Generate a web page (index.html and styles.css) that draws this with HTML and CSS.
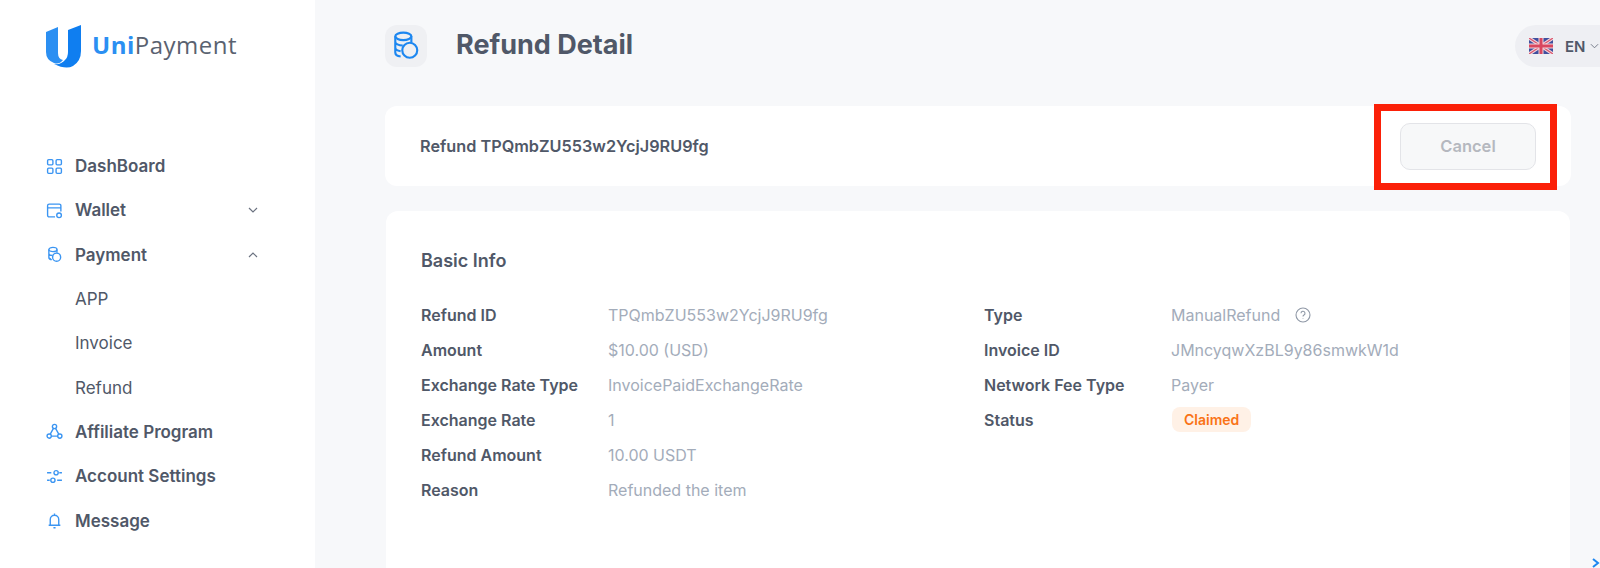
FILE: index.html
```html
<!DOCTYPE html>
<html lang="en">
<head>
<meta charset="utf-8">
<title>Refund Detail</title>
<link rel="stylesheet" href="styles.css">
</head>
<body>
<div class="app">
  <aside class="sidebar">
    <div class="logo">
      <svg class="logo-mark" width="36" height="44" viewBox="0 0 36 44">
        <path d="M0 7 L12 2 V28 Q12 34 17 35 Q13 40 8 38 Q0 35 0 27 Z" fill="#2b8ff2"/>
        <path d="M35 0 V26 Q35 36 27 41 Q20 45 8 39 Q15 40 19 35 Q22 32 22 27 V5 Z" fill="#0f7ef0"/>
      </svg>
      <span class="logo-text"><span class="logo-uni">Uni</span>Payment</span>
    </div>
    <nav class="nav">
      <a class="nav-item">
        <svg class="nav-icon" viewBox="0 0 16 16"><rect x="1.5" y="1.5" width="5" height="5" rx="1"/><rect x="9.5" y="1.5" width="5" height="5" rx="1"/><rect x="1.5" y="9.5" width="5" height="5" rx="1"/><rect x="9.5" y="9.5" width="5" height="5" rx="1"/></svg>
        <span>DashBoard</span>
      </a>
      <a class="nav-item">
        <svg class="nav-icon" viewBox="0 0 16 16"><path d="M8.5 14H3a1.5 1.5 0 0 1-1.500-1.500V3.500A1.500 1.500 0 0 1 3 2h9.500A1.500 1.500 0 0 1 14 3.500V9M1.500 5.500H14"/><circle cx="12.300" cy="12.500" r="2.200"/></svg>
        <span>Wallet</span>
        <svg class="chev" viewBox="0 0 10 6"><path d="M1 1l4 4 4-4"/></svg>
      </a>
      <a class="nav-item">
        <svg class="nav-icon" viewBox="0 0 16 16"><ellipse cx="6.500" cy="3.300" rx="3.800" ry="2"/><path d="M2.700 3.300v7.500c0 1.200 1.300 2 2.800 2M2.700 7c0 1.200 1.500 2 3.500 2M2.700 10.500c0 .8.700 1.300 1.800 1.600M10.300 3.300v3"/><circle cx="10" cy="10.500" r="3.800"/></svg>
        <span>Payment</span>
        <svg class="chev" viewBox="0 0 10 6"><path d="M1 5l4-4 4 4"/></svg>
      </a>
      <a class="nav-item nav-sub">APP</a>
      <a class="nav-item nav-sub">Invoice</a>
      <a class="nav-item nav-sub">Refund</a>
      <a class="nav-item">
        <svg class="nav-icon" viewBox="0 0 16 16"><circle cx="8" cy="3.300" r="2"/><circle cx="3" cy="12.300" r="2"/><circle cx="13" cy="12.300" r="2"/><path d="M7 5.100L4 10.500M9 5.100l3 5.400M5 12.300h6"/></svg>
        <span>Affiliate Program</span>
      </a>
      <a class="nav-item">
        <svg class="nav-icon" viewBox="0 0 16 16"><path d="M1 4.500h4M12.500 4.500H15M1 11.500h2.500M10.500 11.500H15"/><circle cx="9.500" cy="4.500" r="2"/><circle cx="6.500" cy="11.500" r="2"/></svg>
        <span>Account Settings</span>
      </a>
      <a class="nav-item">
        <svg class="nav-icon" viewBox="0 0 16 16"><path d="M2.500 12.500h11M4 12.500V7a4 4 0 0 1 8 0v5.500M8 1.500V3M7 14.800h2"/></svg>
        <span>Message</span>
      </a>
    </nav>
  </aside>

  <main class="main">
    <header class="topbar">
      <div class="page-icon">
        <svg width="28" height="30" viewBox="0 0 26 28" fill="none" stroke="#1d87f0" stroke-width="2">
          <ellipse cx="10.500" cy="5" rx="7.500" ry="3.500"/>
          <path d="M3 5v15c0 2.200 2.500 3.500 5 3.800M3 10c0 2 3 3.500 7 3.500M3 15.500c0 1.800 2 3 5 3.400M18 5v6"/>
          <circle cx="16.500" cy="18" r="7"/>
        </svg>
      </div>
      <h1 class="page-title">Refund Detail</h1>
      <div class="lang">
        <svg class="flag" width="24" height="16" viewBox="0 0 24 16">
          <rect width="24" height="16" rx="2" fill="#3f4f9e"/>
          <path d="M0 0L24 16M24 0L0 16" stroke="#f3d6dc" stroke-width="3.400"/>
          <path d="M0 0L24 16M24 0L0 16" stroke="#d9566e" stroke-width="1.200"/>
          <path d="M12 0V16M0 8H24" stroke="#f3d6dc" stroke-width="5"/>
          <path d="M12 0V16M0 8H24" stroke="#d9475f" stroke-width="3"/>
        </svg>
        <span class="lang-code">EN</span>
        <svg class="lang-chev" viewBox="0 0 10 6"><path d="M1 1l4 4 4-4"/></svg>
      </div>
    </header>

    <section class="card refund-bar">
      <div class="refund-name">Refund TPQmbZU553w2YcjJ9RU9fg</div>
      <button class="cancel-btn" type="button">Cancel</button>
    </section>

    <section class="card basic">
      <h2 class="basic-title">Basic Info</h2>
      <div class="info-grid">
        <dl class="info-col">
          <div class="info-row"><dt>Refund ID</dt><dd>TPQmbZU553w2YcjJ9RU9fg</dd></div>
          <div class="info-row"><dt>Amount</dt><dd>$10.00 (USD)</dd></div>
          <div class="info-row"><dt>Exchange Rate Type</dt><dd>InvoicePaidExchangeRate</dd></div>
          <div class="info-row"><dt>Exchange Rate</dt><dd>1</dd></div>
          <div class="info-row"><dt>Refund Amount</dt><dd>10.00 USDT</dd></div>
          <div class="info-row"><dt>Reason</dt><dd>Refunded the item</dd></div>
        </dl>
        <dl class="info-col">
          <div class="info-row"><dt>Type</dt><dd>ManualRefund
            <svg class="help" width="16" height="16" viewBox="0 0 16 16"><circle cx="8" cy="8" r="7"/><path d="M6 6.300a2 2 0 1 1 3 1.700c-.7.400-1 .8-1 1.500"/><path d="M8 11.500v.6"/></svg>
          </dd></div>
          <div class="info-row"><dt>Invoice ID</dt><dd>JMncyqwXzBL9y86smwkW1d</dd></div>
          <div class="info-row"><dt>Network Fee Type</dt><dd>Payer</dd></div>
          <div class="info-row"><dt>Status</dt><dd><span class="badge">Claimed</span></dd></div>
        </dl>
      </div>
    </section>
  </main>

  <div class="highlight"></div>
  <svg class="corner-chev" width="8" height="10" viewBox="0 0 8 10"><path d="M1 1l5 4-5 4"/></svg>
</div>
</body>
</html>
```

FILE: styles.css
```css
* { box-sizing: border-box; }
html, body { margin: 0; height: 100%; }
body {
  font-family: Inter, "Liberation Sans", sans-serif;
  color: #505868;
  background: #f7f8fa;
  overflow: hidden;
}
.app { position: relative; display: flex; width: 1600px; height: 568px; overflow: hidden; }

.sidebar { flex: 0 0 315px; background: #fff; padding: 25px 0 0 46px; }
.logo { display: flex; align-items: center; gap: 10px; height: 44px; }
.logo-mark { flex: none; }
.logo-text { margin-top: -5px; font-family: "Open Sans", sans-serif; font-size: 24px; font-weight: 500; letter-spacing: .5px; color: #5a6270; }
.logo-uni { color: #2b8ff2; font-weight: 700; }

.nav { margin-top: 75px; width: 216px; display: flex; flex-direction: column; }
.nav-item { display: flex; align-items: center; height: 44.300px; font-size: 17px; font-weight: 600; color: #505868; }
.nav-icon { flex: none; width: 17px; height: 17px; margin-right: 12px; fill: none; stroke: #3b95f2; stroke-width: 1.300; }
.nav-sub { padding-left: 29px; font-weight: 400; }
.chev { margin-left: auto; margin-right: 4px; width: 10px; height: 6px; fill: none; stroke: #6b7280; stroke-width: 1.200; }

.main { flex: 1; min-width: 0; padding: 25px 0 0 70px; }
.topbar { display: flex; align-items: center; height: 42px; }
.page-icon { width: 42px; height: 42px; border-radius: 12px; background: #eff0f3; display: flex; align-items: center; justify-content: center; }
.page-title { margin: -4px 0 0 29px; font-size: 27px; font-weight: 700; color: #505868; }
.lang { margin-left: auto; width: 85px; height: 42px; padding-left: 14px; border-radius: 21px 0 0 21px; background: #eeeff3; display: flex; align-items: center; flex: none; }
.flag { flex: none; }
.lang-code { margin-left: 12px; font-size: 15px; font-weight: 600; color: #505868; }
.lang-chev { margin-left: 5px; flex: none; width: 9px; height: 6px; fill: none; stroke: #6b7280; stroke-width: 1; }

.card { background: #fff; border-radius: 12px; width: 1186px; }
.refund-bar { margin-top: 39px; height: 80px; padding: 0 35px 0 35px; display: flex; align-items: center; justify-content: space-between; }
.refund-name { font-size: 16.250px; font-weight: 600; color: #505868; }
.cancel-btn { width: 136px; height: 47px; border: 1px solid #e3e4e8; border-radius: 10px; background: #f7f8f9; color: #b5b8bf; font: 600 16.500px Inter, sans-serif; }

.basic { margin: 25px 0 0 1px; width: 1184px; height: 400px; padding: 38px 35px; }
.basic-title { margin: 0; font-size: 18px; font-weight: 600; line-height: 24px; color: #505868; }
.info-grid { display: grid; grid-template-columns: 563px 1fr; margin-top: 24px; }
.info-col { margin: 0; }
.info-row { display: flex; align-items: center; height: 35px; font-size: 16px; }
.info-row dt { flex: 0 0 187px; font-weight: 600; color: #505868; }
.info-row dd { margin: 0; color: #a3acba; display: flex; align-items: center; }
.help { margin-left: 15px; fill: none; stroke: #8f98a6; stroke-width: 1.100; }
.badge { margin-left: 1px; padding: 0 12px; height: 25px; line-height: 25px; border-radius: 8px; background: #fff1e6; color: #f97316; font-size: 14px; font-weight: 600; }

.highlight { position: absolute; left: 1374px; top: 104px; width: 183px; height: 86px; border: 7px solid #fb2008; }
.corner-chev { position: absolute; left: 1592px; top: 558px; fill: none; stroke: #1d87f0; stroke-width: 2; }
```
